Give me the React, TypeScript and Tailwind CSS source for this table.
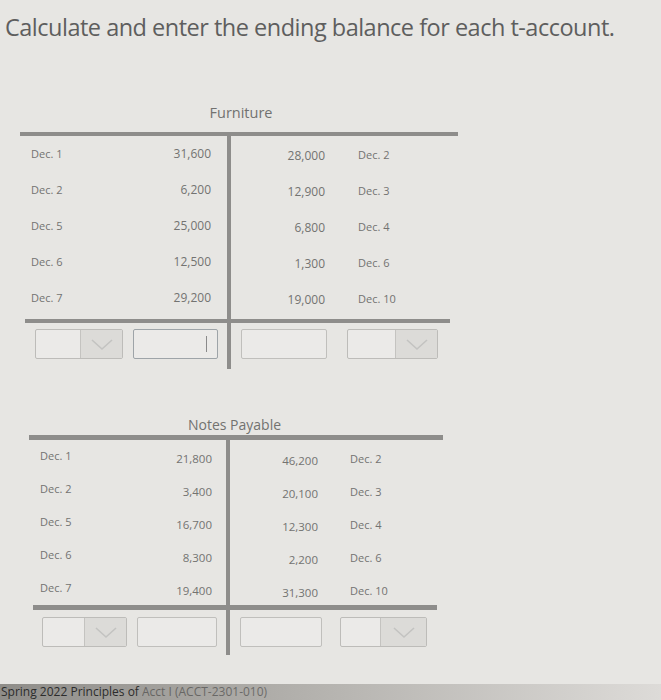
import React from "react";

const font = { fontFamily: '"Open Sans", "Liberation Sans", sans-serif' };

function Chevron() {
  return (
    <svg width="24" height="13" viewBox="0 0 24 13" fill="none">
      <path d="M2 2 L12 11 L22 2" stroke="#c3c3c1" strokeWidth="1.6" />
    </svg>
  );
}

function SelectBox({ w, left }: { w: string; left: string }) {
  return (
    <div className={`flex h-[30px] ${w} rounded-[2px] border border-[#bdbcb9] bg-[#ebeae8] overflow-hidden`}>
      <div className={`${left} h-full border-r border-[#c4c3c0]`} />
      <div className="flex flex-1 items-center justify-center bg-[#dcdbd8]">
        <Chevron />
      </div>
    </div>
  );
}

function TextBox({ w, focused }: { w: string; focused?: boolean }) {
  return (
    <div
      className={`flex h-[30px] ${w} items-center justify-end rounded-[2px] border bg-[#ebeae8] pr-[10px] ${
        focused ? "border-[#9ea4a8]" : "border-[#c0bfbc]"
      }`}
    >
      {focused && <div className="h-[16px] w-[1px] bg-[#8a8a8a]" />}
    </div>
  );
}

type Row = [string, string, string, string];

const furniture: Row[] = [
  ["Dec. 1", "31,600", "28,000", "Dec. 2"],
  ["Dec. 2", "6,200", "12,900", "Dec. 3"],
  ["Dec. 5", "25,000", "6,800", "Dec. 4"],
  ["Dec. 6", "12,500", "1,300", "Dec. 6"],
  ["Dec. 7", "29,200", "19,000", "Dec. 10"],
];

const notes: Row[] = [
  ["Dec. 1", "21,800", "46,200", "Dec. 2"],
  ["Dec. 2", "3,400", "20,100", "Dec. 3"],
  ["Dec. 5", "16,700", "12,300", "Dec. 4"],
  ["Dec. 6", "8,300", "2,200", "Dec. 6"],
  ["Dec. 7", "19,400", "31,300", "Dec. 10"],
];

export default function App() {
  return (
    <div
      className="relative h-[700px] w-[661px] overflow-hidden bg-[#e7e6e3] text-[#737371]"
      style={font}
    >
      <h1 className="pl-[5px] pt-[11px] text-[23.5px] leading-[32px] tracking-[-0.5px] text-[#5e5e5e]">
        Calculate and enter the ending balance for each t-account.
      </h1>

      {/* Furniture */}
      <div className="mt-[60px] ml-[20px] w-[438px]">
        <div className="text-center text-[14.5px] leading-[20px] text-[#727270] pl-[4px]">Furniture</div>
        <div className="mt-[9px] h-[4px] w-full bg-[#8e8d8b]" />
        <div className="flex">
          <div className="w-[207px]">
            {furniture.map((r) => (
              <div key={r[0] + r[1]} className="flex h-[36px] items-center justify-between pl-[11px] pr-[16px]">
                <span className="text-[11px]">{r[0]}</span>
                <span className="text-[12px]">{r[1]}</span>
              </div>
            ))}
            <div className="h-[3px]" />
            <div className="h-[4px] ml-[5px] bg-[#8e8d8b]" />
            <div className="flex gap-[10px] pl-[15px] pt-[6px] pb-[10px]">
              <SelectBox w="w-[88px]" left="w-[45px]" />
              <TextBox w="w-[85px]" focused />
            </div>
          </div>
          <div className="w-[4px] bg-[#8e8d8b]" />
          <div className="flex-1">
            {furniture.map((r) => (
              <div key={r[2] + r[3]} className="flex h-[36px] items-center">
                <span className="w-[94px] pt-[3px] text-right text-[12px]">{r[2]}</span>
                <span className="ml-[33px] pt-[2px] text-[11px]">{r[3]}</span>
              </div>
            ))}
            <div className="h-[3px]" />
            <div className="h-[4px] mr-[8px] bg-[#8e8d8b]" />
            <div className="flex gap-[20px] pl-[10px] pt-[6px]">
              <TextBox w="w-[86px]" />
              <SelectBox w="w-[91px]" left="w-[48px]" />
            </div>
          </div>
        </div>
      </div>

      {/* Notes Payable */}
      <div className="mt-[46px] ml-[29px] w-[414px]">
        <div className="text-center text-[14px] leading-[20px] text-[#727270] pr-[3px]">Notes Payable</div>
        <div className="h-[5px] w-full bg-[#8e8d8b]" />
        <div className="flex">
          <div className="w-[197px]">
            {notes.map((r) => (
              <div key={r[0] + r[1]} className="flex h-[33px] items-center justify-between pl-[11px] pr-[14px]">
                <span className="text-[11px]">{r[0]}</span>
                <span className="pt-[4px] text-[11.5px]">{r[1]}</span>
              </div>
            ))}
            <div className="h-[5px] ml-[4px] bg-[#8e8d8b]" />
            <div className="flex gap-[10px] pl-[13px] pt-[7px] pb-[8px]">
              <SelectBox w="w-[85px]" left="w-[42px]" />
              <TextBox w="w-[80px]" />
            </div>
          </div>
          <div className="w-[4px] bg-[#8e8d8b]" />
          <div className="flex-1">
            {notes.map((r) => (
              <div key={r[2] + r[3]} className="flex h-[33px] items-center">
                <span className="w-[88px] pt-[8px] text-right text-[11.5px]">{r[2]}</span>
                <span className="ml-[32px] pt-[6px] text-[11px]">{r[3]}</span>
              </div>
            ))}
            <div className="h-[5px] mr-[6px] bg-[#8e8d8b]" />
            <div className="flex gap-[18px] pl-[10px] pt-[7px]">
              <TextBox w="w-[82px]" />
              <SelectBox w="w-[87px]" left="w-[40px]" />
            </div>
          </div>
        </div>
      </div>

      {/* footer band */}
      <div className="absolute bottom-0 left-0 right-0 h-[16px] bg-gradient-to-r from-[#8f8d89] via-[#b6b4b0] to-[#dddbd8]">
        <div className="pl-[1px] text-[12px] leading-[16px] text-[#2c2c2c]">
          Spring 2022 Principles of <span className="opacity-50">Acct I (ACCT-2301-010)</span>
        </div>
      </div>
    </div>
  );
}
